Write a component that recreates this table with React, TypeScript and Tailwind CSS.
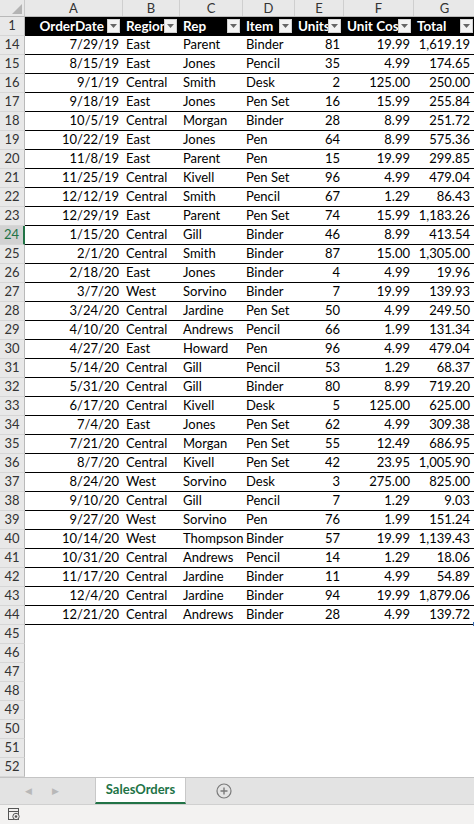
import React from "react";

type Row = [string, string, string, string, string, string, string];

const rows: Row[] = [
  ["7/29/19", "East", "Parent", "Binder", "81", "19.99", "1,619.19"],
  ["8/15/19", "East", "Jones", "Pencil", "35", "4.99", "174.65"],
  ["9/1/19", "Central", "Smith", "Desk", "2", "125.00", "250.00"],
  ["9/18/19", "East", "Jones", "Pen Set", "16", "15.99", "255.84"],
  ["10/5/19", "Central", "Morgan", "Binder", "28", "8.99", "251.72"],
  ["10/22/19", "East", "Jones", "Pen", "64", "8.99", "575.36"],
  ["11/8/19", "East", "Parent", "Pen", "15", "19.99", "299.85"],
  ["11/25/19", "Central", "Kivell", "Pen Set", "96", "4.99", "479.04"],
  ["12/12/19", "Central", "Smith", "Pencil", "67", "1.29", "86.43"],
  ["12/29/19", "East", "Parent", "Pen Set", "74", "15.99", "1,183.26"],
  ["1/15/20", "Central", "Gill", "Binder", "46", "8.99", "413.54"],
  ["2/1/20", "Central", "Smith", "Binder", "87", "15.00", "1,305.00"],
  ["2/18/20", "East", "Jones", "Binder", "4", "4.99", "19.96"],
  ["3/7/20", "West", "Sorvino", "Binder", "7", "19.99", "139.93"],
  ["3/24/20", "Central", "Jardine", "Pen Set", "50", "4.99", "249.50"],
  ["4/10/20", "Central", "Andrews", "Pencil", "66", "1.99", "131.34"],
  ["4/27/20", "East", "Howard", "Pen", "96", "4.99", "479.04"],
  ["5/14/20", "Central", "Gill", "Pencil", "53", "1.29", "68.37"],
  ["5/31/20", "Central", "Gill", "Binder", "80", "8.99", "719.20"],
  ["6/17/20", "Central", "Kivell", "Desk", "5", "125.00", "625.00"],
  ["7/4/20", "East", "Jones", "Pen Set", "62", "4.99", "309.38"],
  ["7/21/20", "Central", "Morgan", "Pen Set", "55", "12.49", "686.95"],
  ["8/7/20", "Central", "Kivell", "Pen Set", "42", "23.95", "1,005.90"],
  ["8/24/20", "West", "Sorvino", "Desk", "3", "275.00", "825.00"],
  ["9/10/20", "Central", "Gill", "Pencil", "7", "1.29", "9.03"],
  ["9/27/20", "West", "Sorvino", "Pen", "76", "1.99", "151.24"],
  ["10/14/20", "West", "Thompson", "Binder", "57", "19.99", "1,139.43"],
  ["10/31/20", "Central", "Andrews", "Pencil", "14", "1.29", "18.06"],
  ["11/17/20", "Central", "Jardine", "Binder", "11", "4.99", "54.89"],
  ["12/4/20", "Central", "Jardine", "Binder", "94", "19.99", "1,879.06"],
  ["12/21/20", "Central", "Andrews", "Binder", "28", "4.99", "139.72"],
];

const cols = [
  { letter: "A", w: "w-[98px]", head: "OrderDate" },
  { letter: "B", w: "w-[57px]", head: "Region" },
  { letter: "C", w: "w-[63px]", head: "Rep" },
  { letter: "D", w: "w-[52px]", head: "Item" },
  { letter: "E", w: "w-[49px]", head: "Units" },
  { letter: "F", w: "w-[70px]", head: "Unit Cost" },
  { letter: "G", w: "w-[62px]", head: "Total" },
];

const FilterButton = () => (
  <div className="absolute right-[3px] top-[2px] flex h-[14px] w-[13px] items-center justify-center border border-[#d0d0d0] bg-[#f3f3f3]">
    <svg width="7" height="4" viewBox="0 0 7 4">
      <path d="M0 0h7L3.5 4z" fill="#666" />
    </svg>
  </div>
);

const RowHeader = ({ n, active }: { n: number; active?: boolean }) => (
  <div
    className={
      "flex h-[19px] w-[25px] shrink-0 items-center justify-center border-b border-b-[#d6d6d6] text-[13px] " +
      (active
        ? "border-r-2 border-r-[#217346] bg-[#d2d2d2] text-[#217346]"
        : "border-r border-r-[#b9b9b9] bg-[#e8e8e8] text-[#333]")
    }
  >
    {n}
  </div>
);

export default function App() {
  return (
    <div className="flex h-[824px] w-[474px] flex-col overflow-hidden bg-white font-['Lato',sans-serif] text-[13px] text-black">
      {/* column letters */}
      <div className="flex h-[17px] shrink-0 border-b border-[#b9b9b9] bg-[#e8e8e8]">
        <div className="relative w-[25px] shrink-0 border-r border-[#c8c8c8]">
          <svg className="absolute bottom-[2px] right-[2px]" width="10" height="10" viewBox="0 0 10 10">
            <path d="M10 0v10H0z" fill="#b4b4b4" />
          </svg>
        </div>
        {cols.map((c) => (
          <div
            key={c.letter}
            className={c.w + " flex shrink-0 items-center justify-center border-r border-[#cfcfcf] text-[13px] leading-none text-[#333]"}
          >
            {c.letter}
          </div>
        ))}
      </div>

      {/* header row */}
      <div className="flex shrink-0">
        <RowHeader n={1} />
        {cols.map((c) => (
          <div
            key={c.head}
            className={c.w + " relative flex h-[19px] shrink-0 items-center overflow-hidden whitespace-nowrap border-b border-black bg-black text-[13.5px] font-bold text-white " + (c.letter === "A" ? "justify-end pr-[19px]" : "pl-[3px]")}
          >
            {c.head}
            <FilterButton />
          </div>
        ))}
      </div>

      {/* data rows */}
      {rows.map((r, i) => {
        const n = 14 + i;
        const last = i === rows.length - 1;
        return (
          <div key={n} className="flex shrink-0">
            <RowHeader n={n} active={n === 24} />
            {cols.map((c, j) => (
              <div
                key={c.letter}
                className={c.w + " relative flex h-[19px] shrink-0 items-center whitespace-nowrap border-b border-black " + (j === 6 ? "justify-end pr-[6px]" : j === 0 || j >= 4 ? "justify-end pr-[4px]" : "pl-[3px]")}
              >
                {r[j]}
                {last && j === 6 && <div className="absolute bottom-[-2px] right-0 h-[4px] w-[3px] bg-[#3b6fb6]" />}
              </div>
            ))}
          </div>
        );
      })}

      {/* empty rows */}
      {[45, 46, 47, 48, 49, 50, 51, 52].map((n) => (
        <div key={n} className="flex shrink-0">
          <RowHeader n={n} />
        </div>
      ))}

      {/* sheet tabs */}
      <div className="flex h-[27px] shrink-0 items-stretch border-t border-[#c4c4c4] bg-[#e3e3e3]">
        <div className="flex w-[95px] items-center gap-[20px] pl-[25px] text-[9px] text-[#b8b8b8]">
          <span>◀</span>
          <span>▶</span>
        </div>
        <div className="flex w-[91px] items-center justify-center border-x border-[#c8c8c8] border-b-2 border-b-[#217346] bg-white text-[13px] font-bold text-[#217346]">
          SalesOrders
        </div>
        <div className="flex w-[76px] items-center justify-center">
          <svg width="16" height="16" viewBox="0 0 16 16">
            <circle cx="8" cy="8" r="7" fill="none" stroke="#7a7a7a" strokeWidth="1.2" />
            <path d="M8 4.5v7M4.5 8h7" stroke="#7a7a7a" strokeWidth="1.4" />
          </svg>
        </div>
      </div>

      {/* status bar */}
      <div className="flex flex-1 items-center border-t border-[#d0d0d0] bg-[#f3f2f1] pl-[8px]">
        <svg width="13" height="13" viewBox="0 0 13 13">
          <rect x="0.5" y="0.5" width="10" height="3" fill="none" stroke="#555" />
          <rect x="0.5" y="3.5" width="10" height="8" fill="none" stroke="#555" />
          <circle cx="8" cy="8.5" r="3.2" fill="#f3f2f1" stroke="#555" />
          <circle cx="8" cy="8.5" r="1.3" fill="#555" />
        </svg>
      </div>
    </div>
  );
}
